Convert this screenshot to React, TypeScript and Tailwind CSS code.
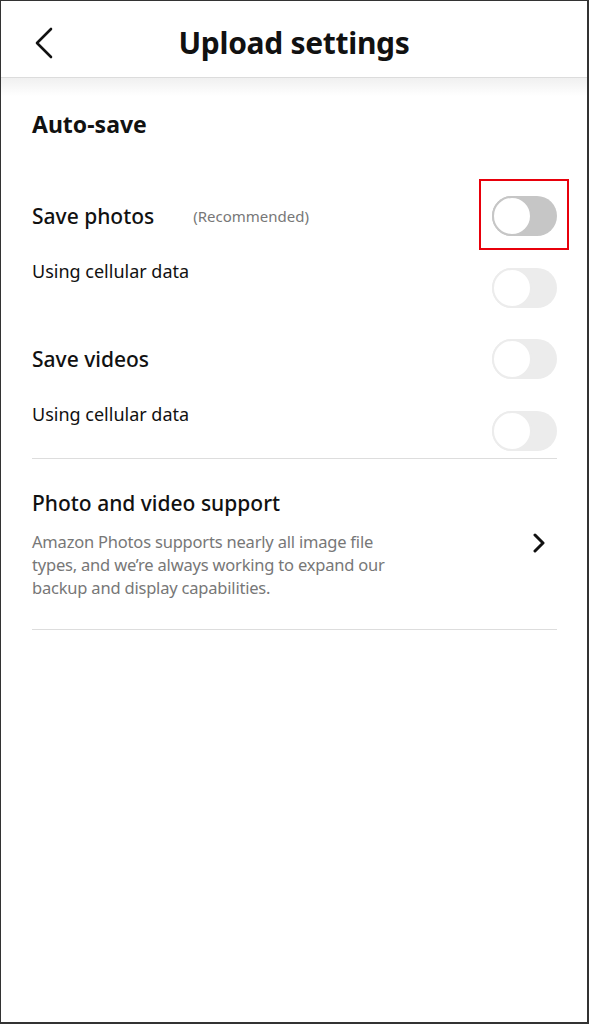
import React from "react";

function Toggle({ dark, boxed }: { dark?: boolean; boxed?: boolean }) {
  const inner = (
    <div
      className={`relative h-[40px] w-[65px] rounded-full ${dark ? "bg-[#c6c6c6]" : "bg-[#ececec]"}`}
    >
      <div
        className={`absolute left-0 top-0 h-[40px] w-[40px] rounded-full bg-white border-[2px] ${dark ? "border-[#c6c6c6]" : "border-[#ececec]"}`}
      />
    </div>
  );
  if (boxed) {
    return (
      <div className="relative h-[40px] w-[65px]">
        {inner}
        <div className="absolute left-[-13px] top-[-17px] h-[71px] w-[90px] border-2 border-[#e8000b]" />
      </div>
    );
  }
  return inner;
}

export default function App() {
  return (
    <div
      className="relative h-[1024px] w-[589px] overflow-hidden bg-white border-l border-t border-r-2 border-b-2 border-[#333333] text-[#111111]"
      style={{ fontFamily: '"Noto Sans", "Open Sans", sans-serif' }}
    >
      {/* header */}
      <div className="relative flex h-[77px] items-center justify-center border-b border-[#dcdcdc]">
        <svg
          className="absolute left-[32px] top-[26px]"
          width="22"
          height="32"
          viewBox="0 0 22 32"
          fill="none"
        >
          <path d="M18 2 L4 16 L18 30" stroke="#111" strokeWidth="2.6" strokeLinecap="round" strokeLinejoin="round" />
        </svg>
        <h1 className="text-[30px] font-bold leading-none tracking-[-0.3px] mt-[8px]">Upload settings</h1>
      </div>
      <div className="h-[18px] bg-gradient-to-b from-[#f0f0f0] to-white" />

      <div className="pl-[31px] pr-[30px]">
        <div className="mt-[13px] text-[23px] font-bold leading-[30px]">Auto-save</div>

        <div className="mt-[57px] flex items-center justify-between">
          <div className="flex items-center">
            <span className="text-[21px] font-medium leading-[28px]">Save photos</span>
            <span className="ml-[39px] mt-[1px] text-[15px] text-[#777]">(Recommended)</span>
          </div>
          <Toggle dark boxed />
        </div>

        <div className="mt-[32px] flex items-start justify-between">
          <span className="text-[18px] leading-[24px] mt-[-9px]">Using cellular data</span>
          <Toggle />
        </div>

        <div className="mt-[31px] flex items-center justify-between">
          <span className="text-[21px] font-medium leading-[28px]">Save videos</span>
          <Toggle />
        </div>

        <div className="mt-[32px] flex items-start justify-between">
          <span className="text-[18px] leading-[24px] mt-[-9px]">Using cellular data</span>
          <Toggle />
        </div>

        <div className="mt-[7px] h-px bg-[#dddddd]" />

        <div className="mt-[30px] text-[21px] font-medium leading-[28px]">Photo and video support</div>
        <div className="mt-[13px] flex items-start justify-between">
          <p className="w-[385px] text-[16.5px] leading-[23px] tracking-[-0.2px] text-[#777777]">
            Amazon Photos supports nearly all image file types, and we’re always working to expand our backup and display capabilities.
          </p>
          <svg width="14" height="20" viewBox="0 0 14 20" className="mr-[11px] mt-[3px]">
            <path d="M3 2 L11 10 L3 18" stroke="#111" strokeWidth="3" fill="none" strokeLinecap="round" strokeLinejoin="round" />
          </svg>
        </div>

        <div className="mt-[30px] h-px bg-[#dddddd]" />
      </div>
    </div>
  );
}
